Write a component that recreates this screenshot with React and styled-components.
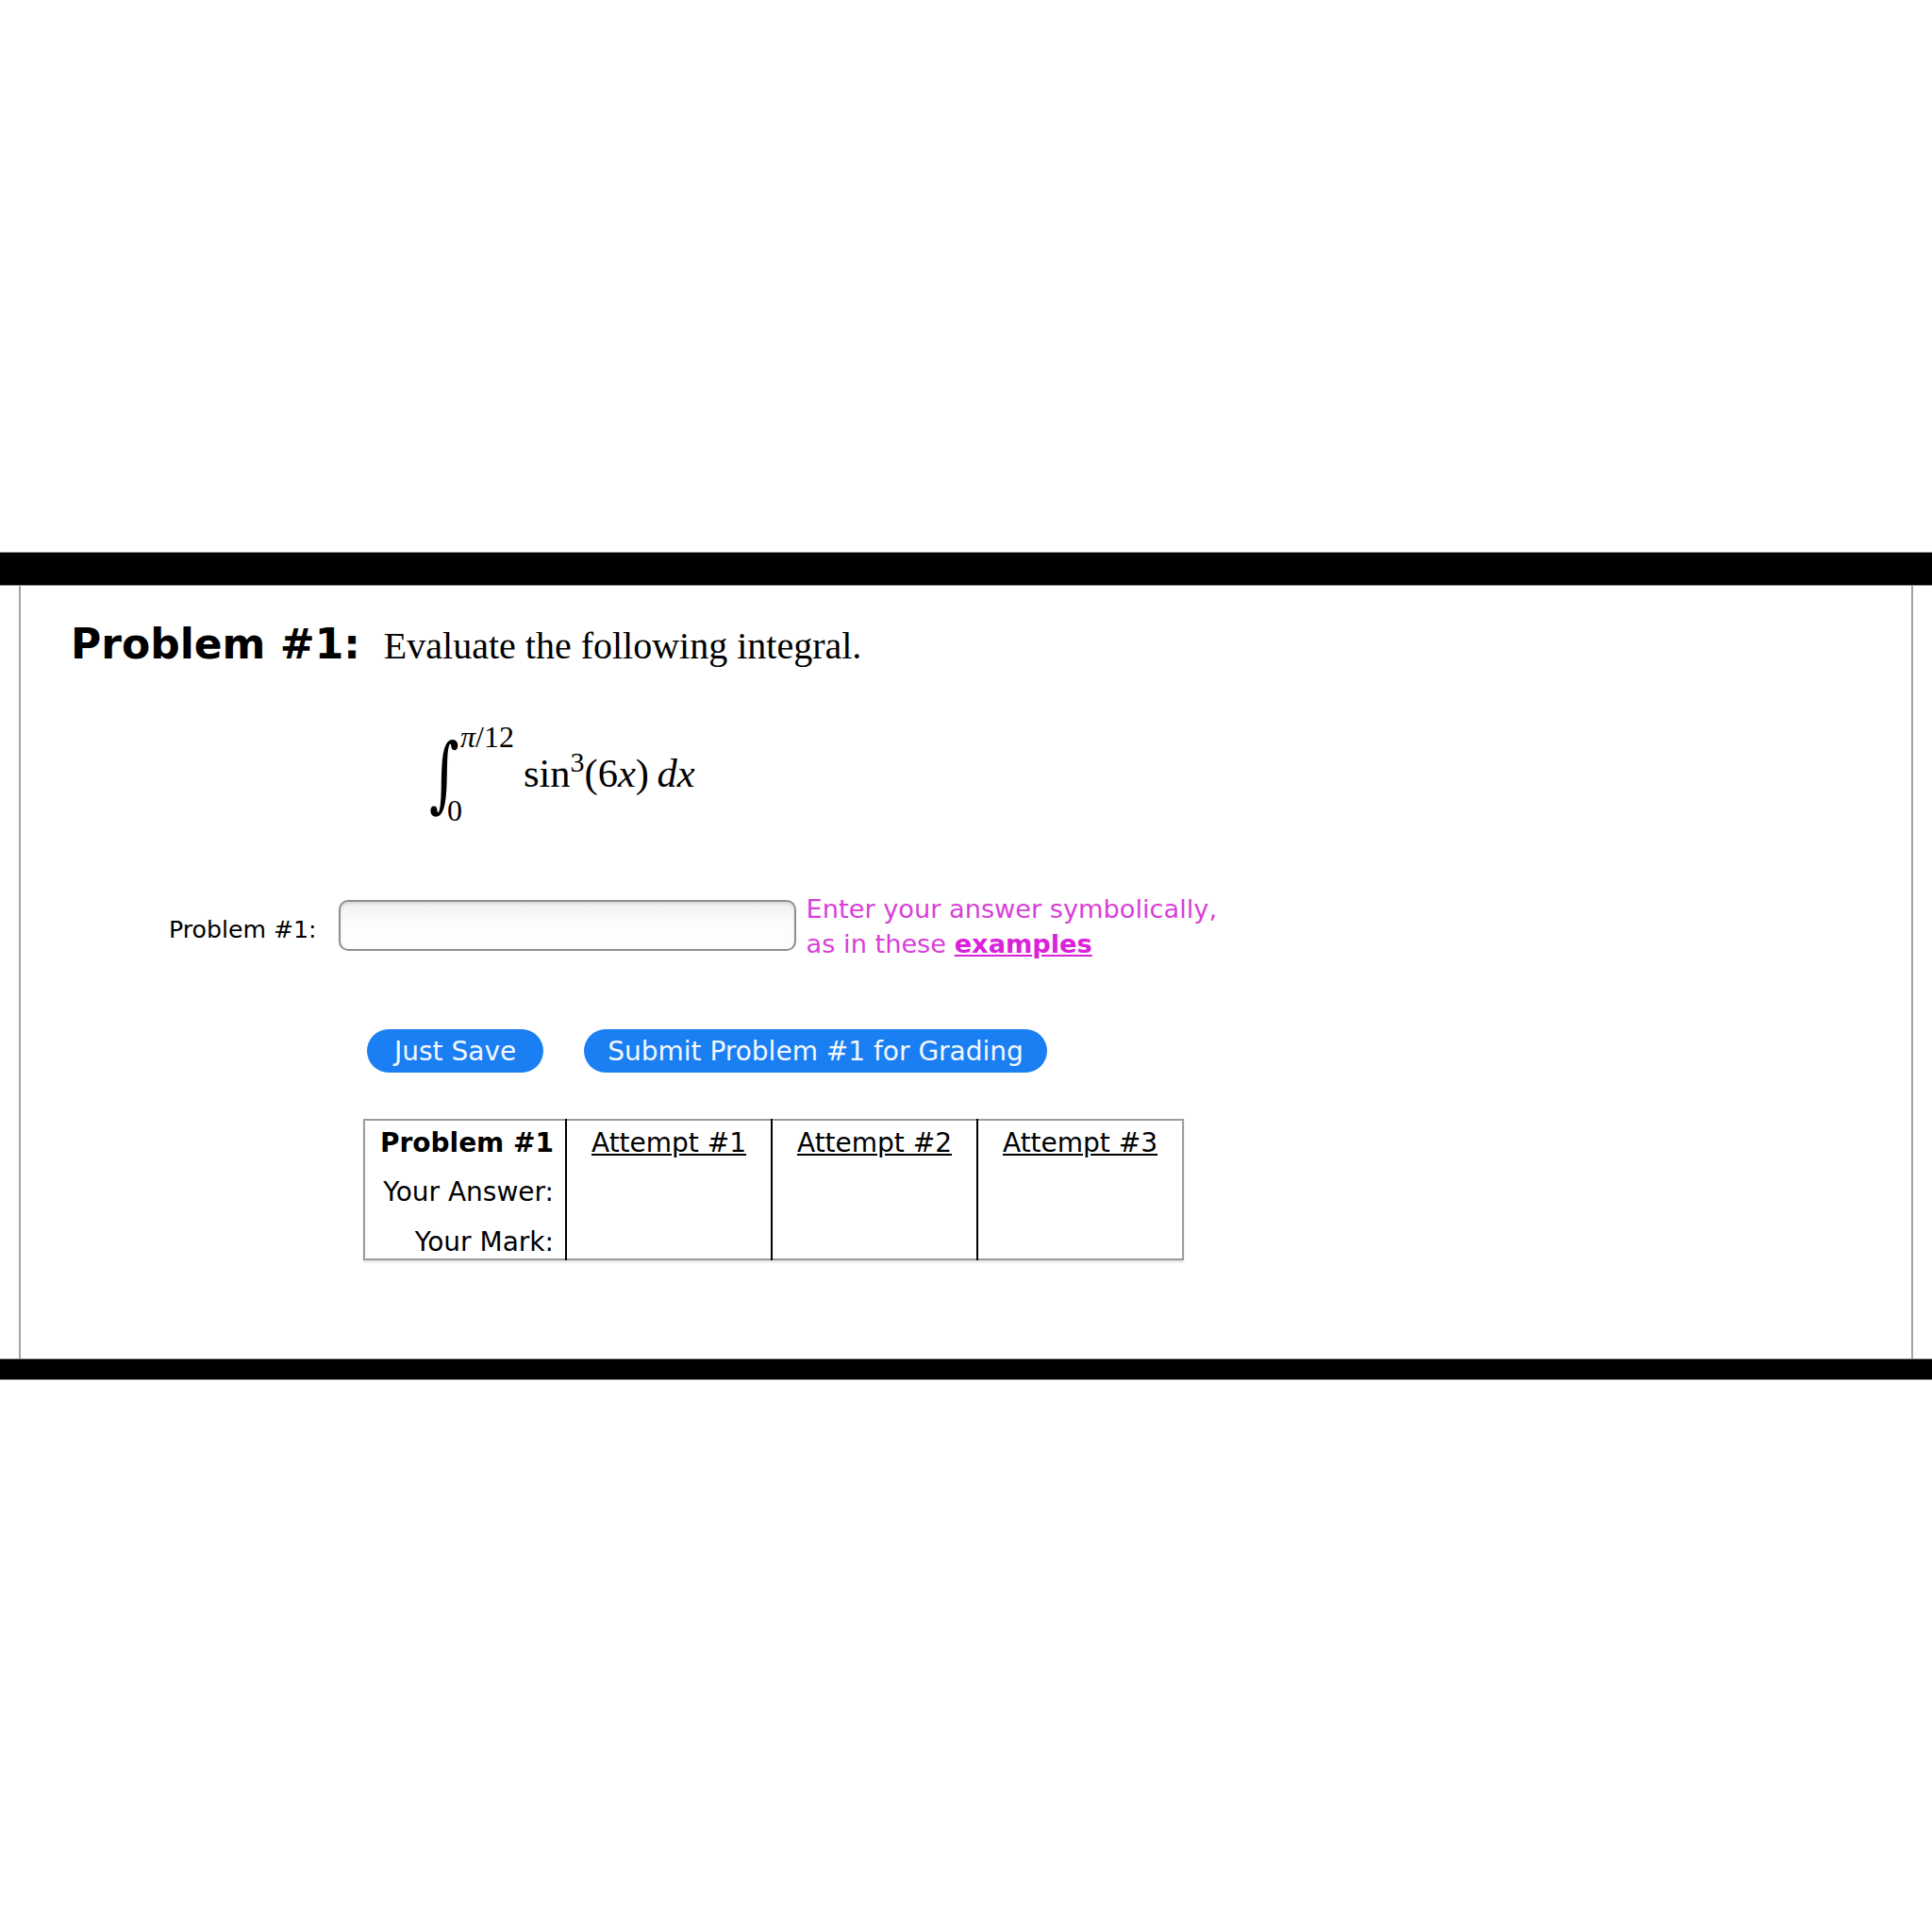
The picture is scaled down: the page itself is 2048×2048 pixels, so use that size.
import styled, { createGlobalStyle } from "styled-components";

const GlobalStyle = createGlobalStyle`
  html, body {
    margin: 0;
    padding: 0;
    background: #fff;
  }
  body {
    font-family: "DejaVu Sans", Verdana, sans-serif;
    color: #000;
  }
`;

const Page = styled.div`
  width: 2048px;
  height: 2048px;
  padding-top: 585px;
  box-sizing: border-box;
`;

const Bar = styled.div`
  height: ${(p) => p.$h}px;
  background: #000;
  border-top: 1px solid #8c8c8c;
  border-bottom: 1px solid #8c8c8c;
  box-sizing: border-box;
`;

const Panel = styled.div`
  margin: 0 20px;
  height: 819px;
  border-left: 2px solid #a3a3a3;
  border-right: 2px solid #a3a3a3;
  box-sizing: border-box;
  padding: 40px 0 0 53px;
`;

const Title = styled.div`
  display: flex;
  align-items: baseline;
  gap: 25px;
  line-height: 1;
`;

const TitleLabel = styled.span`
  font-family: "DejaVu Sans", Verdana, sans-serif;
  font-weight: bold;
  font-size: 44px;
`;

const TitleText = styled.span`
  font-family: "Liberation Serif", "Times New Roman", serif;
  font-size: 40px;
`;

const MathBlock = styled.div`
  display: flex;
  align-items: center;
  margin: 60px 0 0 380px;
  font-family: "Liberation Serif", "Times New Roman", serif;
  line-height: 1;
`;

const IntSign = styled.span`
  display: inline-block;
  width: 22px;
  font-family: "DejaVu Serif", serif;
  font-size: 78px;
  line-height: 1;
  transform: scale(0.78, 1.12);
  transform-origin: left center;
`;

const Limits = styled.div`
  display: flex;
  flex-direction: column;
  justify-content: space-between;
  height: 110px;
  font-size: 32px;
  margin-left: 6px;
`;

const Limit = styled.span`
  margin-left: ${(p) => p.$shift || 0}px;
`;

const Expr = styled.span`
  font-size: 42.5px;
  margin-left: 10px;

  i {
    font-style: italic;
  }
  sup {
    font-size: 30px;
    vertical-align: 16px;
    line-height: 0;
  }
`;

const AnswerRow = styled.div`
  display: flex;
  align-items: flex-start;
  margin: 71px 0 0 104px;
`;

const Label = styled.span`
  font-size: 25.2px;
  margin: 25px 23px 0 0;
`;

const AnswerInput = styled.input`
  width: 485px;
  height: 54px;
  margin-top: 8px;
  box-sizing: border-box;
  border: 2px solid #8e8e8e;
  border-radius: 10px;
  background: linear-gradient(#efefef, #fdfdfd 45%);
  box-shadow: inset 0 2px 3px rgba(0, 0, 0, 0.1);
  font-size: 25px;
  padding: 0 10px;
  outline: none;
`;

const Hint = styled.div`
  margin-left: 11px;
  font-size: 27.2px;
  line-height: 36.5px;
  color: #d83fd8;

  a {
    color: #da22da;
    font-weight: bold;
    text-decoration: underline;
  }
`;

const Buttons = styled.div`
  display: flex;
  gap: 43px;
  margin: 72px 0 0 314px;
`;

const Button = styled.button`
  height: 46px;
  padding: 0 ${(p) => p.$pad}px;
  border: none;
  border-radius: 23px;
  background: #1a7ff2;
  color: #f4f8ff;
  font-family: "DejaVu Sans", Verdana, sans-serif;
  font-size: 28px;
  cursor: pointer;
`;

const Attempts = styled.table`
  margin: 49px 0 0 310px;
  border-collapse: collapse;
  border: 2px solid #9b9b9b;
  box-shadow: 0 2px 2px rgba(0, 0, 0, 0.12);
  font-size: 28px;
  table-layout: fixed;
`;

const Row = styled.tr`
  height: ${(p) => p.$h}px;
`;

const Cell = styled.td`
  padding: ${(p) => (p.$head ? "7px 12px 0 0" : "7px 0 0 0")};
  text-align: ${(p) => (p.$head ? "right" : "center")};
  font-weight: ${(p) => (p.$bold ? "bold" : "normal")};
  border-left: ${(p) => (p.$divider ? "2px solid #000" : "none")};
  text-decoration: ${(p) => (p.$link ? "underline" : "none")};
  vertical-align: top;
  white-space: nowrap;
`;

const rows = [
  { head: "Problem #1", bold: true, h: 53, cells: ["Attempt #1", "Attempt #2", "Attempt #3"] },
  { head: "Your Answer:", h: 53, cells: ["", "", ""] },
  { head: "Your Mark:", h: 42, cells: ["", "", ""] },
];

export default function App() {
  return (
    <Page>
      <GlobalStyle />
      <Bar $h={36} />
      <Panel>
        <Title>
          <TitleLabel>Problem #1:</TitleLabel>
          <TitleText>Evaluate the following integral.</TitleText>
        </Title>

        <MathBlock>
          <IntSign>∫</IntSign>
          <Limits>
            <Limit $shift={5}>
              <i>π</i>/12
            </Limit>
            <Limit $shift={-9}>0</Limit>
          </Limits>
          <Expr>
            sin<sup>3</sup>(6<i>x</i>)&#8201;<i>dx</i>
          </Expr>
        </MathBlock>

        <AnswerRow>
          <Label>Problem #1:</Label>
          <AnswerInput type="text" />
          <Hint>
            Enter your answer symbolically,
            <br />
            as in these <a href="#examples">examples</a>
          </Hint>
        </AnswerRow>

        <Buttons>
          <Button $pad={29}>Just Save</Button>
          <Button $pad={25}>Submit Problem #1 for Grading</Button>
        </Buttons>

        <Attempts>
          <colgroup>
            <col style={{ width: 214 }} />
            <col style={{ width: 218 }} />
            <col style={{ width: 218 }} />
            <col style={{ width: 218 }} />
          </colgroup>
          <tbody>
            {rows.map((r) => (
              <Row key={r.head} $h={r.h}>
                <Cell $head $bold={r.bold}>
                  {r.head}
                </Cell>
                {r.cells.map((c, i) => (
                  <Cell key={i} $divider $link={!!c}>
                    {c}
                  </Cell>
                ))}
              </Row>
            ))}
          </tbody>
        </Attempts>
      </Panel>
      <Bar $h={23} />
    </Page>
  );
}
